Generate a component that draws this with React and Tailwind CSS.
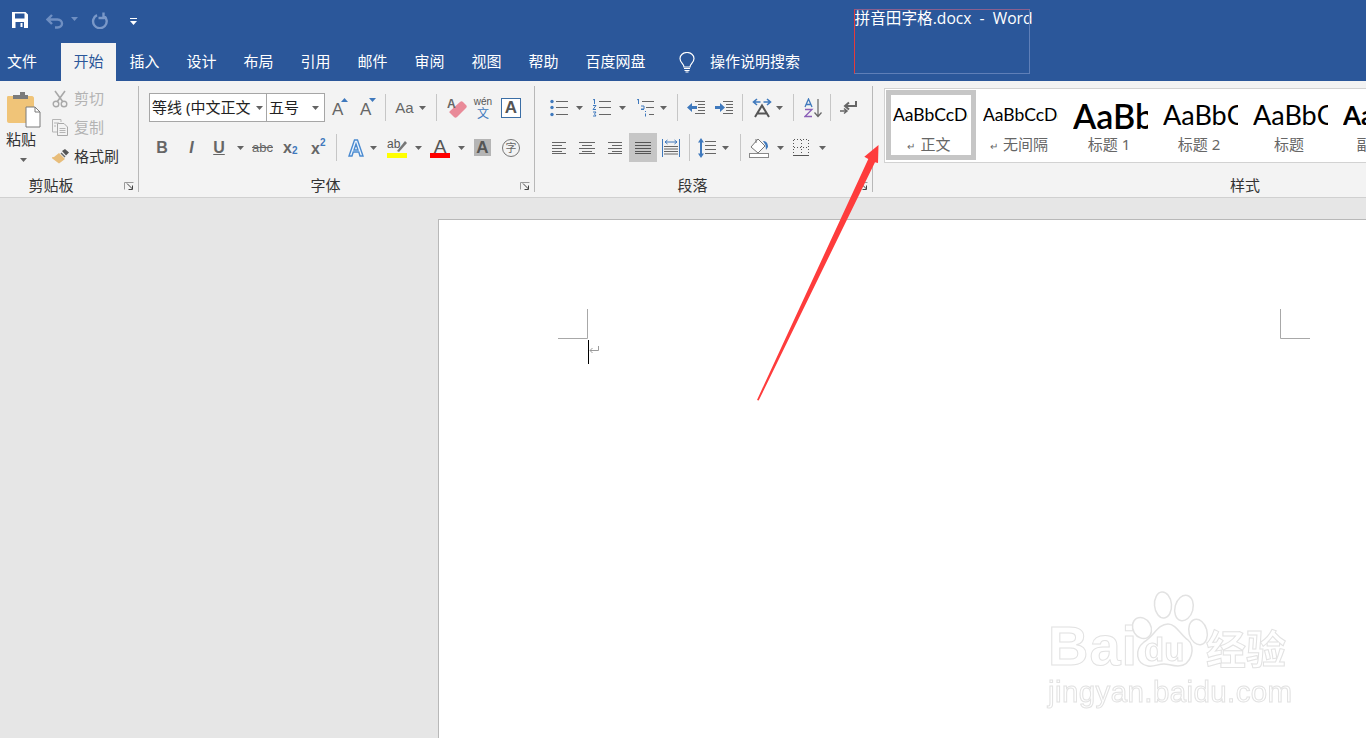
const BASE = "font-['Noto_Sans','Noto_Sans_CJK_SC',sans-serif]";
const B = "#3f79bd";

function Caret({ className = "" }) {
  return (
    <svg width="7" height="4" viewBox="0 0 7 4" className={"shrink-0 " + className}>
      <path d="M0 0h7L3.5 4z" fill="#636363" />
    </svg>
  );
}
function Sep({ className = "" }) {
  return <div className={"w-px h-[27px] bg-[#c6c6c6] shrink-0 " + className} />;
}
function Launcher({ className = "" }) {
  return (
    <svg width="10" height="8" viewBox="0 0 10 8" className={"shrink-0 " + className}>
      <path d="M0.5 7.5V0.5H9.5" fill="none" stroke="#9a9a9a" />
      <path d="M3 1.5L8.5 7M8.5 3.5V7.5H4.5" fill="none" stroke="#444" />
    </svg>
  );
}
function Hl({ w, h, lines, color = "#666", className = "" }) {
  return (
    <svg width={w} height={h} viewBox={`0 0 ${w} ${h}`} className={"shrink-0 " + className}>
      {lines.map(([a, b, y], i) => (
        <line key={i} x1={a} x2={b} y1={y} y2={y} stroke={color} strokeWidth="1" />
      ))}
    </svg>
  );
}
function Letter({ children, className = "" }) {
  return (
    <span className={"shrink-0 text-center font-['Liberation_Sans',sans-serif] leading-none " + className}>
      {children}
    </span>
  );
}

function Group({ className, label, labelClass = "", launcher = true, children }) {
  return (
    <div className={"flex flex-col shrink-0 h-full " + className}>
      <div className="flex-1 min-h-0">{children}</div>
      <div className="h-[24px] flex items-center text-[#333] text-[15px]">
        <div className={"flex-1 text-center " + labelClass}>{label}</div>
        {launcher && <Launcher className="mr-[4px] mt-[2px]" />}
      </div>
    </div>
  );
}
function VSep() {
  return <div className="w-px h-[106px] mt-[5px] bg-[#b8b8b8] shrink-0" />;
}
function Row({ className = "", children }) {
  return <div className={"flex items-center h-[29px] " + className}>{children}</div>;
}

function Save() {
  return (
    <svg width="16" height="16" viewBox="0 0 16 16">
      <path fillRule="evenodd" fill="#fff" d="M0 0H13.5L16 2.5V16H0ZM3 1.5V6.5H12.5V1.5ZM3.5 10V16H12V10ZM8.5 11H10.5V15H8.5Z" />
    </svg>
  );
}

function Style({ preview, label, mark = false, previewClass = "", selected = false }) {
  return (
    <div className={"w-[90px] h-[70px] shrink-0 flex flex-col items-start " + (selected ? "border-[5px] border-[#c6c6c6]" : "border-[5px] border-transparent")}>
      <div className={"w-[75px] h-[40px] ml-[2px] overflow-hidden whitespace-nowrap flex items-center text-black " + previewClass}>{preview}</div>
      <div className="w-[76px] justify-center text-[#666] text-[15px] leading-none mt-[2px] whitespace-nowrap flex items-center">
        {mark && <span className="text-[10px] mr-[5px] mt-[2px]">↵</span>}
        {label}
      </div>
    </div>
  );
}

export default function App() {
  return (
    <div className={"relative w-[1366px] h-[738px] overflow-hidden bg-[#e6e6e6] " + BASE}>
      {/* title bar */}
      <div className="h-[43px] bg-[#2b579a] flex items-start relative">
        <div className="ml-[12px] mt-[12px]"><Save /></div>
        <svg width="18" height="16" viewBox="0 0 18 16" className="ml-[18px] mt-[13px]">
          <path d="M6 2L1.5 6.5L6 11M2 6.5H11.5C14.5 6.5 16 8.5 16 10.5C16 12.5 14.5 14.5 11.5 14.5H9" fill="none" stroke="#6f8fc2" strokeWidth="2.4" />
        </svg>
        <svg width="7" height="4" viewBox="0 0 7 4" className="ml-[7px] mt-[17px]"><path d="M0 0h7L3.5 4z" fill="#6f8fc2" /></svg>
        <svg width="17" height="17" viewBox="0 0 17 17" className="ml-[13px] mt-[12px]">
          <path d="M6 3.2A6.8 6.8 0 1 0 12.5 3.6M12.5 0.5V6H7.5" fill="none" stroke="#7a98c8" strokeWidth="2.4" />
        </svg>
        <svg width="7" height="7" viewBox="0 0 7 7" className="ml-[22px] mt-[18px]">
          <path d="M0 0H7V1H0ZM0 3H7L3.5 7Z" fill="#fff" />
        </svg>
        <div className="absolute left-[854.5px] top-[8px] text-[15.65px] leading-[20px] text-white whitespace-pre font-['Open_Sans','Noto_Sans_CJK_SC',sans-serif]">拼音田字格.docx  -  Word</div>
        <div className="absolute left-[854px] top-[9px] w-[176px] h-[65px] border border-[#e33b3b] border-r-[#5f7fb8] border-b-[#5f7fb8] border-t-[#8a5f8f]" />
      </div>

      {/* tabs */}
      <div className="h-[38px] bg-[#2b579a] flex items-stretch text-[15px] text-white whitespace-nowrap">
        <div className="ml-[7px] w-[54px] flex items-center pb-[2px]">文件</div>
        <div className="w-[55px] bg-[#f3f3f3] text-[#2b579a] flex items-center justify-center pb-[2px]">开始</div>
        {["插入", "设计", "布局", "引用", "邮件", "审阅", "视图", "帮助"].map((t) => (
          <div key={t} className="w-[57px] flex items-center justify-center pb-[2px]">{t}</div>
        ))}
        <div className="w-[87px] flex items-center justify-center pb-[2px]">百度网盘</div>
        <svg width="16" height="21" viewBox="0 0 16 21" className="ml-[20px] self-center">
          <path d="M5 15C5 12 1 10.5 1 6.5A7 6 0 0 1 15 6.5C15 10.5 11 12 11 15Z" fill="none" stroke="#fff" strokeWidth="1.2" />
          <path d="M5 16.5H11M5.5 18.5H10.5M6.5 20H9.5" stroke="#fff" strokeWidth="1.2" />
        </svg>
        <div className="ml-[15px] flex items-center pb-[2px]">操作说明搜索</div>
      </div>

      {/* ribbon */}
      <div className="h-[117px] bg-[#f3f3f3] border-b border-[#d0d0d0] flex">
        <Group className="w-[138px]" label="剪贴板" labelClass="pr-[22px]">
          <div className="flex h-full">
            <div className="w-[45px] pl-[6px] pt-[10px] flex flex-col shrink-0">
              <svg width="35" height="37" viewBox="0 0 35 37">
                <path d="M2 5H26C27 5 28 6 28 7V30C28 31 27 32 26 32H3C2 32 1 31 1 30V7C1 6 1 5 2 5Z" fill="#f0c478" />
                <path d="M7 8V4H14V1H19V4H22V8Z" fill="#7b7b7b" />
                <path d="M20 16H29L34 21V36H20Z" fill="#fff" stroke="#7a7a7a" />
                <path d="M29 16V21H34" fill="none" stroke="#7a7a7a" />
              </svg>
              <div className="text-[15px] leading-[20px] text-[#333] mt-[1px] whitespace-nowrap">粘贴</div>
              <Caret className="ml-[14px] mt-[9px]" />
            </div>
            <div className="pt-[3px] text-[15px] whitespace-nowrap">
              <Row className="text-[#b3b3b3]">
                <svg width="16" height="18" viewBox="0 0 16 18" className="ml-[7px]">
                  <path d="M3 1L11 12M13 1L5 12" stroke="#a8a8a8" strokeWidth="1.6" fill="none" />
                  <circle cx="4" cy="14" r="2.8" fill="none" stroke="#a8a8a8" strokeWidth="1.4" />
                  <circle cx="12" cy="14" r="2.8" fill="none" stroke="#a8a8a8" strokeWidth="1.4" />
                </svg>
                <span className="ml-[6px]">剪切</span>
              </Row>
              <Row className="text-[#b3b3b3]">
                <svg width="16" height="17" viewBox="0 0 16 17" className="ml-[7px]">
                  <path d="M0.5 0.5H9V3M0.5 0.5V13H5" fill="none" stroke="#b5b5b5" />
                  <path d="M5.5 4.5H12L15.5 8V16.5H5.5Z" fill="#f3f3f3" stroke="#a8a8a8" />
                  <path d="M7.5 9.5H13.5M7.5 11.5H13.5M7.5 13.5H13.5M2 4H7M2 7H4" stroke="#b5b5b5" />
                </svg>
                <span className="ml-[6px]">复制</span>
              </Row>
              <Row className="text-[#333]">
                <svg width="17" height="16" viewBox="0 0 17 16" className="ml-[7px]">
                  <path d="M10 2L13 0L17 3.5L14 6.5Z" fill="#555" />
                  <path d="M8 3L14 9L8 13.5L0 7.5L3 7Z" transform="translate(-1 1)" fill="#e8bd7a" />
                  <path d="M9 4L13 8" stroke="#666" strokeWidth="1.5" />
                </svg>
                <span className="ml-[5px]">格式刷</span>
              </Row>
            </div>
          </div>
        </Group>
        <VSep />
        <Group className="w-[395px]" label="字体" labelClass="pr-[8px]">
          <div className="pt-[12px] pl-[10px] flex flex-col gap-[11px]">
            <Row>
              <div className="w-[118px] h-[29px] bg-white border border-[#a6a6a6] flex items-center pl-[2px] text-[15px] text-[#222] whitespace-nowrap">
                <span className="w-[102px] overflow-hidden">等线 (中文正文</span>
                <Caret className="ml-[2px]" />
              </div>
              <div className="w-[58px] h-[29px] bg-white border border-[#a6a6a6] border-l-0 flex items-center pl-[2px] text-[15px] text-[#222] whitespace-nowrap">
                <span className="w-[43px]">五号</span>
                <Caret />
              </div>
              <div className="relative w-[16px] h-[20px] ml-[7px] shrink-0">
                <Letter className="absolute left-0 bottom-0 text-[17px] text-[#666]">A</Letter>
                <svg width="7" height="4" viewBox="0 0 7 4" className="absolute right-0 top-0"><path d="M0 4L3.5 0L7 4Z" fill={B} /></svg>
              </div>
              <div className="relative w-[16px] h-[20px] ml-[12px] shrink-0">
                <Letter className="absolute left-0 bottom-0 text-[17px] text-[#666]">A</Letter>
                <svg width="7" height="4" viewBox="0 0 7 4" className="absolute right-0 top-0"><path d="M0 0L3.5 4L7 0Z" fill={B} /></svg>
              </div>
              <Sep className="ml-[9px]" />
              <Letter className="ml-[9px] w-[19px] text-[15px] text-[#666]">Aa</Letter>
              <Caret className="ml-[5px]" />
              <Sep className="ml-[10px]" />
              <svg width="20" height="22" viewBox="0 0 20 22" className="ml-[10px] shrink-0">
                <path d="M3 14L13 5C14 4 15 4 16 5L19 8C20 9 20 10 19 11L10 20C9 21 8 21 7 20L3 16C2 15.5 2 15 3 14Z" fill="#e98a98" />
                <text x="0" y="11" fontSize="12" fill="#666" fontFamily="Liberation Sans" fontWeight="bold">A</text>
              </svg>
              <div className="ml-[8px] w-[16px] flex flex-col items-center shrink-0 leading-none">
                <span className="text-[10px] text-[#555] font-['Liberation_Sans',sans-serif] leading-[12px]">wén</span>
                <span className="text-[12px] text-[#3f79bd] leading-[12px]">文</span>
              </div>
              <div className="ml-[10px] w-[20px] h-[20px] shrink-0 border border-[#3b6ea5] bg-white flex items-center justify-center">
                <Letter className="text-[17px] text-[#555] font-bold">A</Letter>
              </div>
            </Row>
            <Row>
              <Letter className="ml-[7px] w-[12px] text-[16px] font-bold text-[#666]">B</Letter>
              <Letter className="ml-[18px] w-[11px] text-[16px] font-bold italic text-[#666]">I</Letter>
              <Letter className="ml-[16px] w-[12px] text-[16px] font-bold text-[#666] underline">U</Letter>
              <Caret className="ml-[12px]" />
              <Letter className="ml-[8px] w-[21px] text-[13px] text-[#666] line-through">abc</Letter>
              <div className="ml-[10px] w-[15px] shrink-0 flex items-end">
                <Letter className="text-[16px] font-bold text-[#666]">x</Letter>
                <Letter className="text-[10px] font-bold text-[#3f79bd]">2</Letter>
              </div>
              <div className="ml-[13px] w-[15px] shrink-0 flex items-start">
                <Letter className="text-[16px] font-bold text-[#666] mt-[3px]">x</Letter>
                <Letter className="text-[10px] font-bold text-[#3f79bd]">2</Letter>
              </div>
              <Sep className="ml-[10px]" />
              <svg width="16" height="20" viewBox="0 0 16 20" className="ml-[11px] shrink-0">
                <path d="M6.5 2H9.5L15 18H12L10.8 14H5.2L4 18H1ZM8 6L6 12H10Z" fill="#eef5fd" fillRule="evenodd" stroke="#4a8ad0" strokeWidth="1.4" />
              </svg>
              <Caret className="ml-[6px]" />
              <svg width="20" height="20" viewBox="0 0 20 20" className="ml-[10px] shrink-0">
                <text x="0" y="10" fontSize="12" fill="#555" fontFamily="Liberation Sans">ab</text>
                <path d="M10 13L18 3L20 5L12 14Z" fill="#777" />
                <rect x="0" y="15" width="20" height="5" fill="#ffff00" />
              </svg>
              <Caret className="ml-[8px]" />
              <div className="ml-[8px] w-[20px] shrink-0 flex flex-col items-center">
                <Letter className="text-[19px] text-[#555] h-[16px]">A</Letter>
                <div className="w-[20px] h-[5px] bg-[#ff0000]" />
              </div>
              <Caret className="ml-[8px]" />
              <div className="ml-[9px] w-[17px] h-[17px] shrink-0 bg-[#b5b5b5] flex items-center justify-center">
                <Letter className="text-[17px] font-bold text-[#555]">A</Letter>
              </div>
              <div className="ml-[11px] w-[18px] h-[18px] shrink-0 rounded-full border border-[#777] flex items-center justify-center text-[11px] leading-none text-[#666]">字</div>
            </Row>
          </div>
        </Group>
        <VSep />
        <Group className="w-[337px]" label="段落" labelClass="pr-[8px]">
          <div className="pt-[12px] flex flex-col gap-[11px]">
            <Row>
              <svg width="18" height="18" viewBox="0 0 18 18" className="ml-[15px] shrink-0">
                <path d="M6 2.5H18M6 8.5H18M6 15.5H18" stroke="#666" />
                <circle cx="2" cy="2.5" r="1.7" fill={B} /><circle cx="2" cy="8.5" r="1.7" fill={B} /><circle cx="2" cy="15.5" r="1.7" fill={B} />
              </svg>
              <Caret className="ml-[8px]" />
              <svg width="19" height="18" viewBox="0 0 19 18" className="ml-[9px] shrink-0">
                <path d="M7 2.5H19M7 8.5H19M7 15.5H19" stroke="#666" />
                <path d="M1 1L2.5 0V5M1 6.5H4L1 10.5H4M1 13H4L2.5 15L4 17H1" fill="none" stroke={B} />
              </svg>
              <Caret className="ml-[8px]" />
              <svg width="18" height="18" viewBox="0 0 18 18" className="ml-[10px] shrink-0">
                <path d="M6 2.5H18M10 8.5H18M13 15.5H18" stroke="#666" />
                <path d="M1 1L2.5 0V5M5 7H8V10H5M8 10.5H5M9.5 12V13M9.5 14.5V17.5" fill="none" stroke={B} />
              </svg>
              <Caret className="ml-[6px]" />
              <Sep className="ml-[10px]" />
              <svg width="18" height="16" viewBox="0 0 18 16" className="ml-[9px] shrink-0">
                <path d="M8 1.5H18M11 4.5H18M11 7.5H18M11 10.5H18M8 13.5H18" stroke="#666" />
                <path d="M0 7.5L5 3V6H10V9H5V12Z" fill={B} />
              </svg>
              <svg width="18" height="16" viewBox="0 0 18 16" className="ml-[10px] shrink-0">
                <path d="M8 1.5H18M11 4.5H18M11 7.5H18M11 10.5H18M8 13.5H18" stroke="#666" />
                <path d="M10 7.5L5 3V6H0V9H5V12Z" fill={B} />
              </svg>
              <Sep className="ml-[9px]" />
              <svg width="20" height="20" viewBox="0 0 20 20" className="ml-[9px] shrink-0">
                <path d="M8.5 4H2M5 1L1.5 4L5 7M11.5 4H18M15 1L18.5 4L15 7" fill="none" stroke={B} strokeWidth="1.6" />
                <path d="M3 19L10 7.5L17 19M5.5 15.5H14.5" fill="none" stroke="#555" strokeWidth="2" />
              </svg>
              <Caret className="ml-[4px]" />
              <Sep className="ml-[10px]" />
              <svg width="18" height="20" viewBox="0 0 18 20" className="ml-[10px] shrink-0">
                <path d="M1 9L4.5 1L8 9M2.2 6.5H6.8" fill="none" stroke={B} strokeWidth="1.3" />
                <path d="M1 11.5H8L1 18.5H8" fill="none" stroke="#8b5fb8" strokeWidth="1.3" />
                <path d="M14 1V18M10.5 14.5L14 18.5L17.5 14.5" fill="none" stroke="#666" strokeWidth="1.2" />
              </svg>
              <Sep className="ml-[8px]" />
              <svg width="17" height="14" viewBox="0 0 17 14" className="ml-[9px] shrink-0">
                <path d="M16 0V5H6M9 1.5L5 5L9 8.5" fill="none" stroke="#666" strokeWidth="2" />
                <path d="M0 10H7M4 7.5L7 10L4 12.5" fill="none" stroke="#666" strokeWidth="1.5" />
              </svg>
            </Row>
            <Row>
              <Hl w={14} h={14} className="ml-[17px]" lines={[[0, 14, 1.5], [0, 10, 4.5], [0, 14, 7.5], [0, 10, 10.5], [0, 14, 12.5]]} />
              <Hl w={16} h={14} className="ml-[13px]" lines={[[0, 16, 1.5], [3, 13, 4.5], [0, 16, 7.5], [3, 13, 10.5], [0, 16, 12.5]]} />
              <Hl w={14} h={14} className="ml-[13px]" lines={[[0, 14, 1.5], [4, 14, 4.5], [0, 14, 7.5], [4, 14, 10.5], [0, 14, 12.5]]} />
              <div className="ml-[7px] w-[28px] h-[29px] bg-[#c6c6c6] flex items-center justify-center shrink-0">
                <Hl w={16} h={14} color="#555" lines={[[0, 16, 1.5], [0, 16, 4.5], [0, 16, 7.5], [0, 16, 10.5], [0, 16, 12.5]]} />
              </div>
              <svg width="18" height="18" viewBox="0 0 18 18" className="ml-[5px] shrink-0">
                <path d="M0.5 0V18M17.5 0V18" stroke={B} />
                <path d="M3 3H15M5.5 1L3 3L5.5 5M12.5 1L15 3L12.5 5" fill="none" stroke={B} />
                <path d="M2 7.5H16M2 10H16M2 12.5H16M2 15H16" stroke="#666" />
              </svg>
              <Sep className="ml-[9px]" />
              <svg width="18" height="20" viewBox="0 0 18 20" className="ml-[8px] shrink-0">
                <path d="M7 3.5H18M7 7.5H18M7 11.5H18M7 15.5H18" stroke="#666" />
                <path d="M3 0L6 4.5H4V15.5H6L3 20L0 15.5H2V4.5H0Z" fill={B} />
              </svg>
              <Caret className="ml-[6px]" />
              <Sep className="ml-[11px]" />
              <svg width="20" height="20" viewBox="0 0 20 20" className="ml-[8px] shrink-0">
                <path d="M9 1L2 9L9 15L16 8Z" fill="#fff" stroke="#777" />
                <path d="M7 1V5" stroke="#777" />
                <path d="M14 3C17 3 19 5 19 9L17 12L16.5 7Z" fill={B} />
                <rect x="0.5" y="15.5" width="19" height="4" fill="#fff" stroke="#888" />
              </svg>
              <Caret className="ml-[8px]" />
              <svg width="16" height="17" viewBox="0 0 16 17" className="ml-[9px] shrink-0" shapeRendering="crispEdges">
                <path d="M0.5 0.5H15.5V16M0.5 0.5V16M8 0.5V16M0.5 8.5H15.5" fill="none" stroke="#555" strokeDasharray="1 2" />
                <path d="M0 16.5H16" stroke="#555" />
              </svg>
              <Caret className="ml-[10px]" />
            </Row>
          </div>
        </Group>
        <VSep />
        <Group className="flex-1" label="样式" launcher={false} labelClass="pl-[243px]">
          <div className="ml-[11px] mt-[7px] h-[75px] w-[490px] bg-white border border-[#d2d2d2] border-r-0 p-px pr-0 flex overflow-hidden">
            <Style selected mark label="正文" preview="AaBbCcDd" previewClass="text-[17.5px] font-['Lato',sans-serif]" />
            <Style mark label="无间隔" preview="AaBbCcDd" previewClass="text-[17.5px] font-['Lato',sans-serif]" />
            <Style label="标题 1" preview="AaBb" previewClass="text-[34px] font-semibold font-['Lato',sans-serif]" />
            <Style label="标题 2" preview="AaBbC" previewClass="text-[27px] font-['Lato',sans-serif]" />
            <Style label="标题" preview="AaBbC" previewClass="text-[27px] font-['Lato',sans-serif]" />
            <Style label="副标题" preview="AaB" previewClass="text-[26px] font-bold font-['Lato',sans-serif]" />
          </div>
        </Group>
      </div>

      {/* canvas */}
      <div className="pl-[438px] pt-[21px]">
        <div className="w-[991px] h-[520px] bg-white border-l border-t border-[#b8b8b8] px-[119px] pt-[89px]">
          <div className="flex justify-between">
            <svg width="30" height="30" viewBox="0 0 30 30">
              <path d="M29.5 0V29.5H0" fill="none" stroke="#a8a8a8" />
            </svg>
            <svg width="30" height="30" viewBox="0 0 30 30">
              <path d="M0.5 0V29.5H30" fill="none" stroke="#a8a8a8" />
            </svg>
          </div>
          <div className="flex ml-[30px] mt-[1px]">
            <div className="w-px h-[24px] bg-black" />
            <svg width="10" height="8" viewBox="0 0 10 8" className="mt-[6px]">
              <path d="M9.5 0V4.5H1M3.5 2L1 4.5L3.5 7" fill="none" stroke="#9a9a9a" />
            </svg>
          </div>
        </div>
      </div>

      {/* watermark */}
      <div className="absolute left-[1048px] top-[590px] w-[250px] h-[120px] blur-[0.4px] text-white font-['Liberation_Sans','Noto_Sans_CJK_SC',sans-serif] [-webkit-text-stroke:1px_#e2e2e2]">
        <span className="absolute left-0 top-[26px] text-[56px] leading-[60px] font-bold tracking-[1px]">Bai</span>
        <svg width="80" height="80" viewBox="0 0 80 80" className="absolute left-[82px] top-0">
          <g fill="#fff" stroke="#e2e2e2" strokeWidth="1.5">
            <ellipse cx="12" cy="38" rx="9" ry="11" transform="rotate(-30 12 38)" />
            <ellipse cx="33" cy="15" rx="8.5" ry="13" transform="rotate(-5 33 15)" />
            <ellipse cx="54" cy="18" rx="9" ry="13" transform="rotate(15 54 18)" />
            <ellipse cx="68" cy="42" rx="9" ry="13" transform="rotate(-15 68 42)" />
            <path d="M38 34C46 34 50 44 58 50C66 56 62 76 48 76C42 76 38 74 34 74C28 74 24 77 18 76C6 74 4 60 14 52C24 46 28 34 38 34Z" />
          </g>
        </svg>
        <span className="absolute left-[96px] top-[40px] text-[33px] leading-[40px] font-bold">du</span>
        <span className="absolute left-[158px] top-[38px] text-[40px] leading-[44px] font-bold whitespace-nowrap">经验</span>
        <span className="absolute left-0 top-[84px] text-[29.5px] leading-[36px] whitespace-nowrap tracking-[0.4px]">jingyan.baidu.com</span>
      </div>

      {/* arrow */}
      <svg width="1366" height="738" viewBox="0 0 1366 738" className="absolute left-0 top-0 pointer-events-none">
        <path d="M878.5 145L864.3 156.7L868.3 159L757 400L758.7 400.5L875 162.3L878 163Z" fill="#fe3c3c" />
      </svg>
    </div>
  );
}
